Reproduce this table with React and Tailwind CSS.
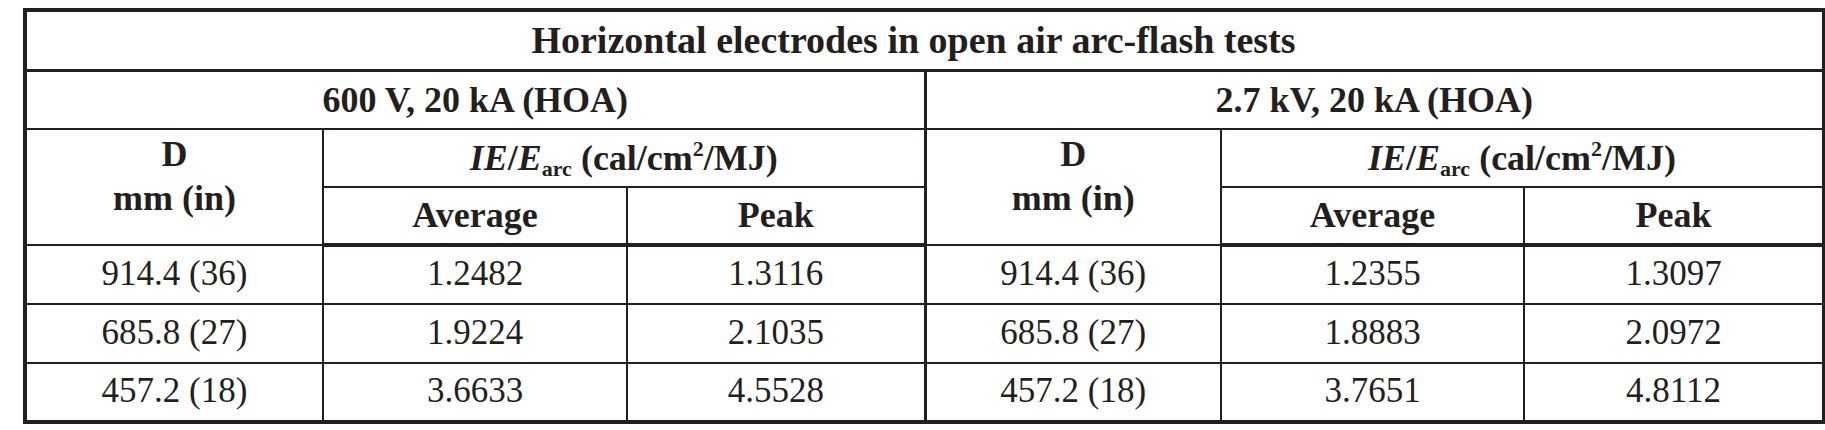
const rows = [
  ["914.4 (36)", "1.2482", "1.3116", "914.4 (36)", "1.2355", "1.3097"],
  ["685.8 (27)", "1.9224", "2.1035", "685.8 (27)", "1.8883", "2.0972"],
  ["457.2 (18)", "3.6633", "4.5528", "457.2 (18)", "3.7651", "4.8112"],
];

function IeLabel() {
  return (
    <span>
      <i>IE</i>/<i>E</i>
      <sub className="text-[22px] align-baseline relative top-[6px]">arc</sub>{" "}
      (cal/cm<sup className="text-[22px] align-baseline relative -top-[14px]">2</sup>/MJ)
    </span>
  );
}

export default function App() {
  const cell = "border-2 border-[#231f20] text-center p-0";
  const head = cell + " font-bold text-[36px]";
  return (
    <div className="w-[1825px] h-[430px] bg-white pt-[8px] pl-[23px] font-['Liberation_Serif','Times_New_Roman',serif] text-[#231f20]">
      <table className="table-fixed border-collapse border-4 border-[#231f20] w-[1799px]">
        <colgroup>
          <col className="w-[298px]" />
          <col className="w-[304px]" />
          <col className="w-[298px]" />
          <col className="w-[296px]" />
          <col className="w-[303px]" />
          <col className="w-[300px]" />
        </colgroup>
        <thead>
          <tr className="h-[58px]">
            <th colSpan={6} className={cell + " font-bold text-[38px] border-b-[3px] pr-[22px]"}>
              Horizontal electrodes in open air arc-flash tests
            </th>
          </tr>
          <tr className="h-[58px]">
            <th colSpan={3} className={head + " border-r-[3px]"}>
              600 V, 20 kA (HOA)
            </th>
            <th colSpan={3} className={head}>
              2.7 kV, 20 kA (HOA)
            </th>
          </tr>
          <tr className="h-[58px]">
            <th rowSpan={2} className={head + " leading-[1.2] pb-[20px]"}>
              D<br />mm (in)
            </th>
            <th colSpan={2} className={head + " border-r-[3px]"}>
              <IeLabel />
            </th>
            <th rowSpan={2} className={head + " leading-[1.2] pb-[20px]"}>
              D<br />mm (in)
            </th>
            <th colSpan={2} className={head}>
              <IeLabel />
            </th>
          </tr>
          <tr className="h-[58px]">
            <th className={head + " border-b-4"}>Average</th>
            <th className={head + " border-b-4 border-r-[3px]"}>Peak</th>
            <th className={head + " border-b-4"}>Average</th>
            <th className={head + " border-b-4"}>Peak</th>
          </tr>
        </thead>
        <tbody>
          {rows.map((r, i) => (
            <tr key={i} className="h-[59px]">
              {r.map((v, j) => (
                <td
                  key={j}
                  className={cell + " text-[35px] font-normal" + (j === 2 ? " border-r-[3px]" : "")}
                >
                  {v}
                </td>
              ))}
            </tr>
          ))}
        </tbody>
      </table>
    </div>
  );
}
